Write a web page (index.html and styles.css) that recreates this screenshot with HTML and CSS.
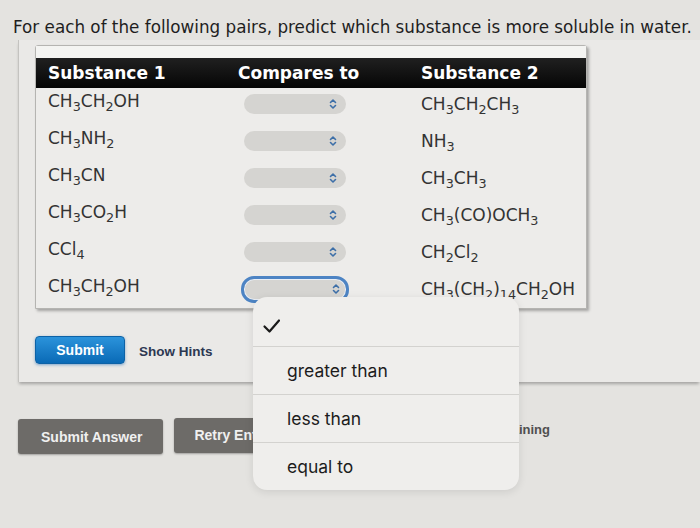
FILE: index.html
```html
<!DOCTYPE html>
<html>
<head>
<meta charset="utf-8">
<link rel="stylesheet" href="styles.css">
</head>
<body>
<div class="title">For each of the following pairs, predict which substance is more soluble in water.</div>
<div class="panel">
  <div class="qtable">
    <div class="strip"></div>
    <div class="thead">
      <div class="c1">Substance 1</div>
      <div class="c2">Compares to</div>
      <div class="c3">Substance 2</div>
    </div>
    <div class="row">
      <div class="c1">CH<sub>3</sub>CH<sub>2</sub>OH</div>
      <div class="c2"><div class="sel"><svg class="arr" viewBox="0 0 8 12"><path d="M1.5 4.5 L4 2 L6.5 4.5 M1.5 7.5 L4 10 L6.5 7.5"/></svg></div></div>
      <div class="c3 s2">CH<sub>3</sub>CH<sub>2</sub>CH<sub>3</sub></div>
    </div>
    <div class="row">
      <div class="c1">CH<sub>3</sub>NH<sub>2</sub></div>
      <div class="c2"><div class="sel"><svg class="arr" viewBox="0 0 8 12"><path d="M1.5 4.5 L4 2 L6.5 4.5 M1.5 7.5 L4 10 L6.5 7.5"/></svg></div></div>
      <div class="c3 s2">NH<sub>3</sub></div>
    </div>
    <div class="row">
      <div class="c1">CH<sub>3</sub>CN</div>
      <div class="c2"><div class="sel"><svg class="arr" viewBox="0 0 8 12"><path d="M1.5 4.5 L4 2 L6.5 4.5 M1.5 7.5 L4 10 L6.5 7.5"/></svg></div></div>
      <div class="c3 s2">CH<sub>3</sub>CH<sub>3</sub></div>
    </div>
    <div class="row">
      <div class="c1">CH<sub>3</sub>CO<sub>2</sub>H</div>
      <div class="c2"><div class="sel"><svg class="arr" viewBox="0 0 8 12"><path d="M1.5 4.5 L4 2 L6.5 4.5 M1.5 7.5 L4 10 L6.5 7.5"/></svg></div></div>
      <div class="c3 s2">CH<sub>3</sub>(CO)OCH<sub>3</sub></div>
    </div>
    <div class="row">
      <div class="c1">CCl<sub>4</sub></div>
      <div class="c2"><div class="sel"><svg class="arr" viewBox="0 0 8 12"><path d="M1.5 4.5 L4 2 L6.5 4.5 M1.5 7.5 L4 10 L6.5 7.5"/></svg></div></div>
      <div class="c3 s2">CH<sub>2</sub>Cl<sub>2</sub></div>
    </div>
    <div class="row last">
      <div class="c1">CH<sub>3</sub>CH<sub>2</sub>OH</div>
      <div class="c2"><div class="sel focus"><svg class="arr" viewBox="0 0 8 12"><path d="M1.5 4.5 L4 2 L6.5 4.5 M1.5 7.5 L4 10 L6.5 7.5"/></svg></div></div>
      <div class="c3 s2">CH<sub>3</sub>(CH<sub>2</sub>)<sub>14</sub>CH<sub>2</sub>OH</div>
    </div>
  </div>
  <div class="actions">
    <div class="btn-blue">Submit</div>
    <div class="hints">Show Hints</div>
  </div>
</div>
<div class="bottom">
  <div class="btn-gray">Submit Answer</div>
  <div class="btn-gray retry">Retry Entire Group</div>
  <div class="remain">1 attempt remaining</div>
</div>
<div class="menu">
  <div class="item check"><svg class="tick" viewBox="0 0 20 16"><path d="M2.5 8.5 L7.5 13.5 L17 2.5"/></svg></div>
  <div class="item">greater than</div>
  <div class="item">less than</div>
  <div class="item">equal to</div>
</div>
</body>
</html>
```
FILE: styles.css
```css
html, body {
  margin: 0;
  padding: 0;
}
body {
  width: 700px;
  height: 528px;
  overflow: hidden;
  position: relative;
  background: #e4e3e0;
  font-family: "DejaVu Sans", Verdana, sans-serif;
  color: #2a2a2a;
}
.title {
  padding: 16px 0 0 13px;
  font-size: 16.8px;
  line-height: 22px;
  white-space: nowrap;
  color: #1e1e1e;
  height: 24px;
}
.panel {
  margin-left: 18px;
  padding: 5px 0 18px 16px;
  background: #eae9e7;
  border-left: 1px solid #c4c3c0;
  box-shadow: 0 3px 3px -1px rgba(0, 0, 0, 0.28);
}
.qtable {
  width: 550px;
  background: #edecea;
  border: 1px solid #b5b4b1;
  border-radius: 3px 3px 0 0;
  box-shadow: 2px 2px 3px rgba(0, 0, 0, 0.3);
}
.strip {
  height: 12px;
  background: #f4f4f2;
}
.thead, .row {
  display: grid;
  grid-template-columns: 195px 180px 175px;
}
.thead {
  height: 30px;
  align-items: center;
  background: linear-gradient(#202020, #050505);
  color: #fff;
  font-weight: bold;
  font-size: 17px;
}
.c1 { padding-left: 12px; }
.c2 { padding-left: 7px; }
.c3 { padding-left: 10px; }
.row {
  height: 37px;
  padding-top: 2px;
  box-sizing: border-box;
  font-size: 17px;
  line-height: 22px;
  color: #333;
}
.row.last { height: 35px; }
.s2 { padding-top: 3px; }
sub {
  font-size: 0.75em;
  vertical-align: -0.3em;
  line-height: 0;
}
.sel {
  position: relative;
  margin: 4px 0 0 6px;
  width: 102px;
  height: 20px;
  border-radius: 10px;
  background: #d5d4d1;
}
.sel.focus {
  margin: 1px 0 0 3px;
  width: 102px;
  height: 21px;
  border: 3px solid #4d84c4;
  box-shadow: inset 0 0 0 1px #e8eef6;
  border-radius: 13px;
}
.arr {
  position: absolute;
  right: 9px;
  top: 4px;
  width: 8px;
  height: 12px;
}
.sel.focus .arr { right: 6px; top: 4px; }
.arr path {
  fill: none;
  stroke: #3d6fa8;
  stroke-width: 1.6;
  stroke-linecap: round;
  stroke-linejoin: round;
}
.actions {
  display: flex;
  align-items: center;
  gap: 14px;
  margin-top: 27px;
}
.btn-blue {
  width: 90px;
  height: 28px;
  box-sizing: border-box;
  border-radius: 4px;
  background: linear-gradient(#2b93db, #0a6ab6);
  border: 1px solid #0d62a6;
  box-shadow: 0 1px 3px rgba(20, 100, 180, 0.5);
  color: #fff;
  font-family: "Liberation Sans", Arial, sans-serif;
  font-weight: bold;
  font-size: 14px;
  display: flex;
  align-items: center;
  justify-content: center;
}
.hints {
  font-family: "Liberation Sans", Arial, sans-serif;
  font-weight: bold;
  font-size: 13.5px;
  color: #2d3852;
  margin-top: 2px;
}
.bottom {
  display: flex;
  align-items: center;
  gap: 11px;
  margin: 37px 0 0 18px;
  width: 532px;
}
.btn-gray {
  height: 35px;
  padding: 0 21px 0 23px;
  border-radius: 3px;
  background: #6d6b68;
  color: #f0f0f0;
  font-family: "Liberation Sans", Arial, sans-serif;
  font-weight: bold;
  font-size: 14px;
  display: flex;
  align-items: center;
  white-space: nowrap;
  box-shadow: 0 1px 2px rgba(0, 0, 0, 0.3);
}
.retry {
  height: 35px;
  padding: 0 21px 0 20px;
  margin-top: -3px;
}
.remain {
  margin-left: auto;
  margin-top: -14px;
  font-family: "Liberation Sans", Arial, sans-serif;
  font-weight: bold;
  font-size: 13px;
  color: #505050;
  white-space: nowrap;
}
.menu {
  position: absolute;
  left: 253px;
  top: 297px;
  width: 266px;
  height: 193px;
  border-radius: 14px;
  background: #efeeec;
  box-shadow: 0 2px 8px rgba(0, 0, 0, 0.1);
  overflow: hidden;
  font-family: Inter, "Liberation Sans", sans-serif;
  font-size: 17.5px;
  color: #1c1c1c;
}
.item {
  height: 48px;
  box-sizing: border-box;
  border-top: 1px solid #d3d2cf;
  display: flex;
  align-items: center;
  padding-left: 34px;
}
.item.check {
  border-top: none;
  height: 49px;
  padding-left: 9px;
  padding-top: 8px;
}
.tick {
  width: 20px;
  height: 16px;
}
.tick path {
  fill: none;
  stroke: #1a1a1a;
  stroke-width: 2.2;
  stroke-linecap: round;
  stroke-linejoin: round;
}
```
